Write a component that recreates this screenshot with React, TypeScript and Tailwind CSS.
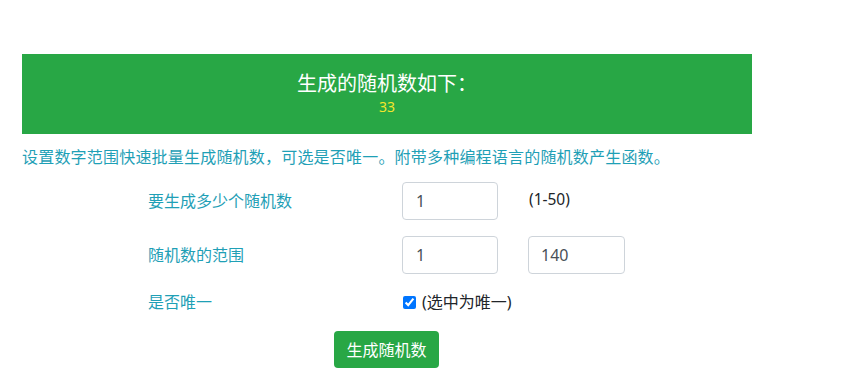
import React from "react";

export default function App() {
  const font = { fontFamily: '"Segoe UI", "Noto Sans", "Noto Sans CJK SC", sans-serif' };
  return (
    <div className="w-[848px] h-[373px] bg-white pl-[22px] pt-[54px] overflow-hidden" style={font}>
      <div className="w-[730px] h-[80px] bg-[#28a745] flex flex-col items-center justify-center">
        <div className="text-white text-[20px] leading-[26px] mt-[-2px]">生成的随机数如下：</div>
        <div className="text-[#f3e62b] text-[14px] leading-[18px] mt-[1px]">33</div>
      </div>
      <p className="mt-[11px] text-[#1fa0b6] text-[16px] leading-[24px] tracking-[0.2px]">
        设置数字范围快速批量生成随机数，可选是否唯一。附带多种编程语言的随机数产生函数。
      </p>
      <div className="mt-[13px] flex flex-col">
        <div className="flex items-center h-[38px]">
          <div className="w-[126px]" />
          <div className="w-[254px] text-[#1fa0b6] text-[16px]">要生成多少个随机数</div>
          <input
            defaultValue="1"
            className="w-[96px] h-[38px] border border-[#ced4da] rounded-[4px] px-[13px] text-[16px] text-[#495057] outline-none"
          />
          <div className="ml-[31px] text-[15.5px] text-[#212529] mt-[-3px]">(1-50)</div>
        </div>
        <div className="flex items-center h-[38px] mt-[16px]">
          <div className="w-[126px]" />
          <div className="w-[254px] text-[#1fa0b6] text-[16px]">随机数的范围</div>
          <input
            defaultValue="1"
            className="w-[96px] h-[38px] border border-[#ced4da] rounded-[4px] px-[13px] text-[16px] text-[#495057] outline-none"
          />
          <input
            defaultValue="140"
            className="ml-[30px] w-[97px] h-[38px] border border-[#ced4da] rounded-[4px] px-[12px] text-[16px] text-[#495057] outline-none"
          />
        </div>
        <div className="flex items-center h-[24px] mt-[16px]">
          <div className="w-[126px]" />
          <div className="w-[254px] text-[#1fa0b6] text-[16px]">是否唯一</div>
          <input type="checkbox" defaultChecked className="w-[13px] h-[13px] ml-[1px] accent-[#0075ff]" />
          <span className="ml-[6px] text-[16px] text-[#212529]">(选中为唯一)</span>
        </div>
        <div className="mt-[17px] pl-[312px]">
          <button className="w-[105px] h-[37px] bg-[#28a745] text-white text-[16px] rounded-[4px]">
            生成随机数
          </button>
        </div>
      </div>
    </div>
  );
}
